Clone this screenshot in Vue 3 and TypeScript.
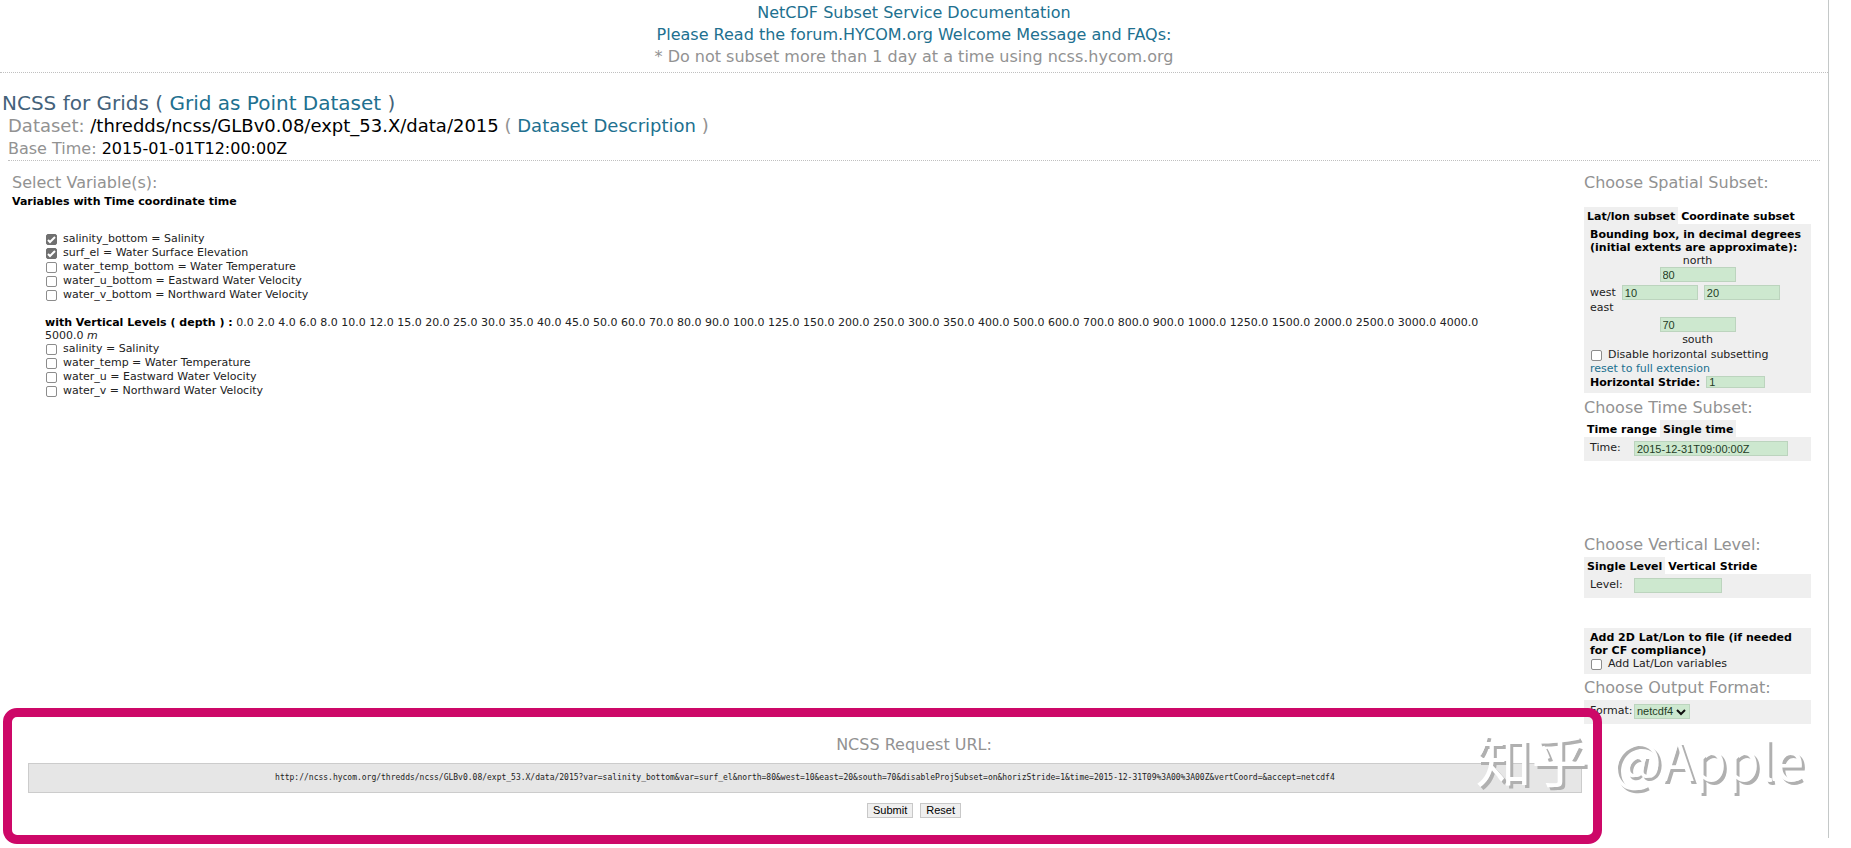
<script setup lang="ts">
import { computed, reactive, ref } from 'vue'

interface Variable {
  name: string
  label: string
  checked: boolean
}

const surfaceVariables = reactive<Variable[]>([
  { name: 'salinity_bottom', label: 'Salinity', checked: true },
  { name: 'surf_el', label: 'Water Surface Elevation', checked: true },
  { name: 'water_temp_bottom', label: 'Water Temperature', checked: false },
  { name: 'water_u_bottom', label: 'Eastward Water Velocity', checked: false },
  { name: 'water_v_bottom', label: 'Northward Water Velocity', checked: false },
])

const levelVariables = reactive<Variable[]>([
  { name: 'salinity', label: 'Salinity', checked: false },
  { name: 'water_temp', label: 'Water Temperature', checked: false },
  { name: 'water_u', label: 'Eastward Water Velocity', checked: false },
  { name: 'water_v', label: 'Northward Water Velocity', checked: false },
])

const levels =
  '0.0 2.0 4.0 6.0 8.0 10.0 12.0 15.0 20.0 25.0 30.0 35.0 40.0 45.0 50.0 60.0 70.0 80.0 90.0 100.0 125.0 150.0 200.0 250.0 300.0 350.0 400.0 500.0 600.0 700.0 800.0 900.0 1000.0 1250.0 1500.0 2000.0 2500.0 3000.0 4000.0 5000.0'

const north = ref('80')
const west = ref('10')
const east = ref('20')
const south = ref('70')
const stride = ref('1')
const time = ref('2015-12-31T09:00:00Z')
const level = ref('')
const format = ref('netcdf4')
const disableSubset = ref(false)
const addLatLon = ref(false)

const requestUrl = computed(() => {
  const vars = [...surfaceVariables, ...levelVariables]
    .filter((v) => v.checked)
    .map((v) => `var=${v.name}`)
    .join('&')
  return (
    `http://ncss.hycom.org/thredds/ncss/GLBv0.08/expt_53.X/data/2015?${vars}` +
    `&north=${north.value}&west=${west.value}&east=${east.value}&south=${south.value}` +
    `&disableProjSubset=on&horizStride=${stride.value}&time=${encodeURIComponent(time.value)}` +
    `&vertCoord=${level.value}&accept=${format.value}`
  )
})
</script>

<template>
  <div class="page">
    <header class="banner">
      <a href="#">NetCDF Subset Service Documentation</a>
      <a href="#">Please Read the forum.HYCOM.org Welcome Message and FAQs:</a>
      <span>* Do not subset more than 1 day at a time using ncss.hycom.org</span>
    </header>

    <h1>NCSS for Grids ( <a href="#">Grid as Point Dataset</a> )</h1>
    <div class="dataset">
      <h2>Dataset: <b>/thredds/ncss/GLBv0.08/expt_53.X/data/2015</b> ( <a href="#">Dataset Description</a> )</h2>
      <p>Base Time: <b>2015-01-01T12:00:00Z</b></p>
    </div>

    <form @submit.prevent>
      <div class="columns">
        <section class="variables">
          <h3>Select Variable(s):</h3>
          <strong>Variables with Time coordinate time</strong>
          <ul>
            <li v-for="v in surfaceVariables" :key="v.name">
              <label><input v-model="v.checked" type="checkbox" />{{ v.name }} = {{ v.label }}</label>
            </li>
          </ul>
          <p class="levels"><strong>with Vertical Levels ( depth ) :</strong> {{ levels }} <em>m</em></p>
          <ul class="tight">
            <li v-for="v in levelVariables" :key="v.name">
              <label><input v-model="v.checked" type="checkbox" />{{ v.name }} = {{ v.label }}</label>
            </li>
          </ul>
        </section>

        <aside class="options">
          <section class="spatial">
            <h3>Choose Spatial Subset:</h3>
            <div class="tabs">
              <button type="button" class="active">Lat/lon subset</button>
              <button type="button">Coordinate subset</button>
            </div>
            <div class="panel">
              <strong>Bounding box, in decimal degrees (initial extents are approximate):</strong>
              <div class="pole">
                <label for="north">north</label>
                <input id="north" v-model="north" type="text" />
              </div>
              <div class="sides">
                <label for="west">west</label>
                <input id="west" v-model="west" type="text" />
                <input id="east" v-model="east" type="text" />
                <label for="east" class="east">east</label>
              </div>
              <div class="pole south">
                <input id="south" v-model="south" type="text" />
                <label for="south">south</label>
              </div>
              <label class="check"><input v-model="disableSubset" type="checkbox" />Disable horizontal subsetting</label>
              <a href="#" class="reset">reset to full extension</a>
              <div class="stride">
                <label for="stride">Horizontal Stride:</label>
                <input id="stride" v-model="stride" type="text" />
              </div>
            </div>
          </section>

          <section class="time">
            <h3>Choose Time Subset:</h3>
            <div class="tabs">
              <button type="button">Time range</button>
              <button type="button" class="active">Single time</button>
            </div>
            <div class="panel field">
              <label for="time">Time:</label>
              <input id="time" v-model="time" type="text" class="wide" />
            </div>
          </section>

          <section class="vertical">
            <h3>Choose Vertical Level:</h3>
            <div class="tabs">
              <button type="button" class="active">Single Level</button>
              <button type="button">Vertical Stride</button>
            </div>
            <div class="panel field">
              <label for="level">Level:</label>
              <input id="level" v-model="level" type="text" />
            </div>
          </section>

          <section class="panel latlon">
            <strong>Add 2D Lat/Lon to file (if needed for CF compliance)</strong>
            <label class="check"><input v-model="addLatLon" type="checkbox" />Add Lat/Lon variables</label>
          </section>

          <section class="output">
            <h3>Choose Output Format:</h3>
            <div class="panel field">
              <label for="format">Format:</label>
              <span class="select">
                <select id="format" v-model="format">
                  <option>netcdf4</option>
                  <option>netcdf</option>
                </select>
                <svg viewBox="0 0 10 8" aria-hidden="true"><path d="M1 2l4 4 4-4" /></svg>
              </span>
            </div>
          </section>
        </aside>
      </div>

      <section class="request">
        <h3>NCSS Request URL:</h3>
        <output class="url">{{ requestUrl }}</output>
        <div class="actions">
          <button type="submit">Submit</button>
          <button type="reset">Reset</button>
        </div>
        <div class="watermark"><span>知乎</span><span class="handle">@Apple</span></div>
        <div class="highlight"></div>
      </section>
    </form>
  </div>
</template>

<style>
body {
  background: #fff;
}
</style>

<style scoped>
.page {
  margin: 0 22px 10px 0;
  border-right: 1px solid #c4c8c8;
  font: 11px/13px Verdana, "DejaVu Sans", sans-serif;
  color: #222;
}
h1, h2, h3, p, ul {
  margin: 0;
  padding: 0;
  font-weight: normal;
}
a {
  color: #21708f;
  text-decoration: none;
}
button, input, select {
  box-sizing: border-box;
  margin: 0;
}
strong {
  color: #000;
}
.banner {
  display: flex;
  flex-direction: column;
  align-items: center;
  padding: 2px 0 4px;
  border-bottom: 1px dotted #c0c0c0;
  font-size: 16px;
  line-height: 22px;
  color: #929292;
}
h1 {
  margin-top: 18px;
  padding-left: 2px;
  font-size: 20px;
  line-height: 24px;
  color: #44627a;
}
.dataset {
  margin: 0 8px;
  border-bottom: 1px dotted #c0c0c0;
  color: #929292;
}
.dataset b {
  font-weight: normal;
  color: #000;
}
h2 {
  font-size: 18px;
  line-height: 22px;
}
.dataset p {
  font-size: 16px;
  line-height: 23px;
}
.columns {
  display: flex;
  padding: 11px 17px 0 12px;
}
.variables {
  flex: 1;
  margin-right: 70px;
}
h3 {
  font-size: 16px;
  line-height: 22px;
  color: #929292;
}
.variables > strong {
  display: block;
  line-height: 16px;
}
ul {
  margin: 22px 0 0 33px;
  list-style: none;
}
ul.tight {
  margin-top: 0;
}
li, .check {
  height: 14px;
  line-height: 14px;
}
li label, .check {
  display: flex;
  align-items: center;
}
input[type='checkbox'] {
  appearance: none;
  width: 11px;
  height: 11px;
  margin: 0 6px 0 1px;
  border: 1px solid #8c8c8c;
  border-radius: 2px;
  background: #fff;
}
input[type='checkbox']:checked {
  border-color: #707070;
  background: #707070 url("data:image/svg+xml,%3Csvg xmlns='http://www.w3.org/2000/svg' viewBox='0 0 9 9'%3E%3Cpath d='M1 5l2 2 5-5' fill='none' stroke='white' stroke-width='2'/%3E%3C/svg%3E");
}
.levels {
  margin: 14px 0 0 33px;
}
.options {
  width: 227px;
}
.tabs {
  display: flex;
}
.tabs button {
  height: 17px;
  padding: 2px 3px 0;
  border: 0;
  background: none;
  font: bold 11px/15px Verdana, "DejaVu Sans", sans-serif;
  color: #000;
  white-space: nowrap;
}
.tabs .active, .panel {
  background: #efefef;
}
.spatial .tabs {
  margin-top: 13px;
}
.panel {
  padding: 4px 6px;
}
.panel > strong {
  display: block;
}
.panel input[type='text'], select {
  height: 15px;
  padding: 0 2px;
  border: 1px solid #bcd4be;
  border-radius: 0;
  background: #cde8cf;
  font: 11px/13px "Liberation Sans", Arial, sans-serif;
  color: #243c26;
}
.pole {
  display: flex;
  flex-direction: column;
  align-items: center;
}
.south {
  line-height: 16px;
}
.pole input, .sides input {
  width: 76px;
}
.sides {
  display: flex;
  flex-wrap: wrap;
  align-items: center;
  column-gap: 6px;
  padding: 3px 0 1px;
}
.sides .east {
  width: 100%;
  line-height: 16px;
}
.reset {
  display: block;
}
.stride {
  display: flex;
  align-items: center;
  gap: 6px;
  height: 14px;
  font-weight: bold;
  color: #000;
}
.panel .stride input {
  width: 59px;
  height: 12px;
  line-height: 10px;
}
.time {
  height: 137px;
  margin-top: 3px;
}
.vertical {
  height: 95px;
}
.time h3, .vertical h3, .output h3 {
  line-height: 24px;
}
.field {
  display: flex;
  height: 16px;
}
.field label {
  width: 44px;
}
.field input {
  width: 88px;
}
.field .wide {
  width: 154px;
}
.latlon {
  margin-bottom: 2px;
  padding: 3px 6px;
}
.select {
  position: relative;
}
select {
  appearance: none;
  width: 56px;
}
.select svg {
  position: absolute;
  right: 4px;
  top: 4px;
  width: 10px;
  height: 8px;
  fill: none;
  stroke: #111;
  stroke-width: 2;
}
.request {
  position: relative;
  padding: 10px 0 20px;
  text-align: center;
}
.highlight {
  position: absolute;
  inset: -16px 226px -6px 3px;
  border: 9px solid #cd0868;
  border-radius: 14px;
  pointer-events: none;
}
.url {
  display: block;
  box-sizing: border-box;
  width: 85%;
  margin: 7px 0 10px 28px;
  border: 1px solid #ccc;
  background: #e6e6e6;
  font: 8px/28px "DejaVu Sans Mono", monospace;
  color: #222;
}
.actions {
  display: flex;
  justify-content: center;
  gap: 7px;
}
.actions button {
  height: 15px;
  padding: 0 5px;
  border: 1px solid #c8c8c8;
  background: #efefef;
  font: 11px/13px "Liberation Sans", Arial, sans-serif;
  color: #000;
}
.watermark {
  position: absolute;
  right: 24px;
  top: -2px;
  display: flex;
  gap: 24px;
  font: 56px/72px "Noto Sans CJK SC", sans-serif;
  color: #fff;
  text-shadow: 3px 3px 0 #b0b0b0;
  pointer-events: none;
}
.handle {
  font-size: 53px;
}
</style>
